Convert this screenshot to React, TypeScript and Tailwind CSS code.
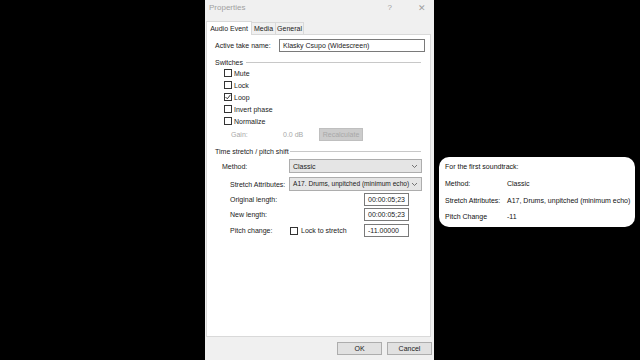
import React from "react";

const Check = ({ checked = false }: { checked?: boolean }) => (
  <span className="w-[8px] h-[8px] border border-[#333] bg-white flex items-center justify-center shrink-0">
    {checked && (
      <svg width="6" height="6" viewBox="0 0 6 6">
        <path d="M0.5 3 L2.3 4.8 L5.5 0.8" fill="none" stroke="#222" strokeWidth="0.9" />
      </svg>
    )}
  </span>
);

const Chevron = () => (
  <svg width="7" height="5" viewBox="0 0 7 5" className="ml-auto mr-[3px] shrink-0">
    <path d="M1 1 L3.5 3.5 L6 1" fill="none" stroke="#555" strokeWidth="0.8" />
  </svg>
);

const Header = ({ label, lineStart }: { label: string; lineStart: string }) => (
  <div className="h-[10px] flex items-center pl-[8px] pr-[9px]">
    <span className={lineStart}>{label}</span>
    <span className="flex-1 h-px bg-[#c8c8c8]" />
  </div>
);

const SwitchRow = ({ label, checked }: { label: string; checked?: boolean }) => (
  <div className="h-[12px] flex items-center gap-[2px] pl-[17px]">
    <Check checked={checked} />
    <span>{label}</span>
  </div>
);

const TimeBox = ({ value }: { value: string }) => (
  <div className="ml-auto mr-[21px] w-[45px] h-[13px] border border-[#7a7a7a] bg-white flex items-center pl-[3px]">
    {value}
  </div>
);

const App = () => {
  return (
    <div className="w-[640px] h-[360px] bg-black flex font-['Liberation_Sans',Arial,sans-serif] text-[7px] leading-none text-[#1a1a1a]">
      <div className="ml-[205px] w-[229px] h-[360px] bg-[#f0f0f0] flex flex-col">
        <div className="h-[16px] flex items-center pl-[4px] pr-[8px] text-[8px] text-[#a0a0a0]">
          <span>Properties</span>
          <span className="ml-auto mr-[26px]">?</span>
          <span className="text-[9px]">✕</span>
        </div>
        <div className="h-[18px] flex items-end pl-[1px] whitespace-nowrap">
          <div className="h-[14px] w-[46px] flex items-center justify-center bg-white border border-b-0 border-[#d9d9d9] relative top-px">Audio Event</div>
          <div className="h-[12px] w-[24px] flex items-center justify-center border border-l-0 border-b-0 border-[#d9d9d9]">Media</div>
          <div className="h-[12px] w-[28px] flex items-center justify-center border border-l-0 border-b-0 border-[#d9d9d9]">General</div>
        </div>
        <div className="h-[303px] ml-[1px] mr-[3px] bg-white border border-[#d9d9d9] flex flex-col whitespace-nowrap">
          <div className="mt-[4px] h-[13px] flex items-center pl-[8px]">
            <span className="w-[64px]">Active take name:</span>
            <div className="w-[146px] h-[13px] border border-[#7a7a7a] flex items-center pl-[3px]">Klasky Csupo (Widescreen)</div>
          </div>
          <div className="mt-[5px]">
            <Header label="Switches" lineStart="mr-[3px]" />
          </div>
          <SwitchRow label="Mute" />
          <SwitchRow label="Lock" />
          <SwitchRow label="Loop" checked />
          <SwitchRow label="Invert phase" />
          <SwitchRow label="Normalize" />
          <div className="h-[14px] flex items-center pl-[24px] text-[#a8a8a8]">
            <span className="w-[52px]">Gain:</span>
            <span className="w-[36px]">0.0 dB</span>
            <div className="w-[44px] h-[13px] bg-[#cccccc] border border-[#bfbfbf] flex items-center justify-center">Recalculate</div>
          </div>
          <div className="mt-[5px]">
            <Header label="Time stretch / pitch shift" lineStart="mr-[1px]" />
          </div>
          <div className="mt-[3px] h-[14px] flex items-center pl-[15px]">
            <span className="w-[67px]">Method:</span>
            <div className="w-[133px] h-[14px] bg-[#e5e5e5] border border-[#adadad] flex items-center pl-[3px]">
              Classic
              <Chevron />
            </div>
          </div>
          <div className="mt-[4px] h-[14px] flex items-center pl-[23px]">
            <span className="w-[59px]">Stretch Attributes:</span>
            <div className="w-[133px] h-[14px] bg-[#e5e5e5] border border-[#adadad] flex items-center pl-[3px] overflow-hidden">
              <span className="text-[6.6px]">A17. Drums, unpitched (minimum echo)</span>
              <Chevron />
            </div>
          </div>
          <div className="mt-[2px] h-[13px] flex items-center pl-[23px]">
            <span>Original length:</span>
            <TimeBox value="00:00:05;23" />
          </div>
          <div className="mt-[2px] h-[13px] flex items-center pl-[23px]">
            <span>New length:</span>
            <TimeBox value="00:00:05;23" />
          </div>
          <div className="mt-[3px] h-[13px] flex items-center pl-[23px]">
            <span className="w-[60px]">Pitch change:</span>
            <Check />
            <span className="ml-[3px]">Lock to stretch</span>
            <TimeBox value="-11.00000" />
          </div>
        </div>
        <div className="flex-1 flex items-center justify-end gap-[5px] pr-[2px]">
          <div className="w-[45px] h-[13px] bg-[#e1e1e1] border border-[#adadad] flex items-center justify-center">OK</div>
          <div className="w-[45px] h-[13px] bg-[#e1e1e1] border border-[#adadad] flex items-center justify-center">Cancel</div>
        </div>
      </div>
      <div className="ml-[5px] mt-[157px] w-[196px] h-[70px] bg-white rounded-[10px] flex flex-col pl-[6px] pt-[6px] text-[7px] text-[#111] whitespace-nowrap">
        <div className="h-[6px] flex items-center">For the first soundtrack:</div>
        <div className="mt-[11px] h-[6px] flex items-center">
          <span className="w-[62px]">Method:</span>
          <span>Classic</span>
        </div>
        <div className="mt-[11px] h-[6px] flex items-center">
          <span className="w-[62px]">Stretch Attributes:</span>
          <span>A17, Drums, unpitched (minimum echo)</span>
        </div>
        <div className="mt-[10px] h-[6px] flex items-center">
          <span className="w-[62px]">Pitch Change</span>
          <span>-11</span>
        </div>
      </div>
    </div>
  );
};

export default App;
